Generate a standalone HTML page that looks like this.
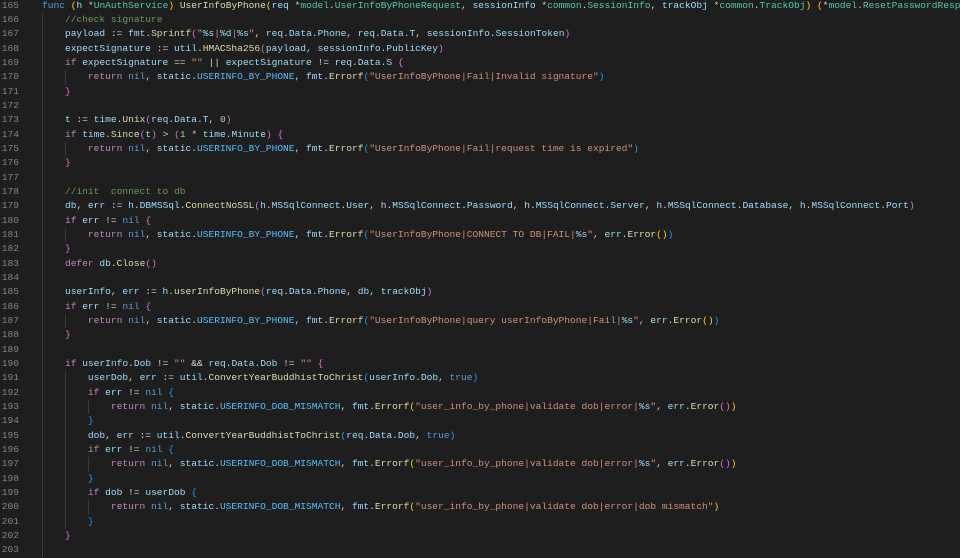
<!DOCTYPE html>
<html><head><meta charset="utf-8"><style>
html,body{margin:0;padding:0;background:#1e1e1e;width:960px;height:558px;overflow:hidden}
#w{position:absolute;top:-1.2px;left:0;font-family:"Liberation Mono",monospace;font-size:9.57px;line-height:14.33px;color:#d4d4d4;white-space:normal}
.r{height:14.33px;position:relative;overflow:visible}
.ln{position:absolute;left:0;top:0;width:19px;text-align:right;color:#858585}
.cd{position:absolute;left:42px;top:0;white-space:pre}
i{display:inline-block;width:4ch;height:14.33px;vertical-align:top;border-left:1px solid #3a3a3a;box-sizing:border-box}
.k{color:#569cd6}.c{color:#c586c0}.v{color:#9cdcfe}.f{color:#dcdcaa}.t{color:#4ec9b0}.s{color:#ce9178}.n{color:#b5cea8}.m{color:#6a9955}.o{color:#4fc1ff}
.b1{color:#ffd700}.b2{color:#da70d6}.b3{color:#179fff}
</style></head><body><div id="w">
<div class="r"><span class="ln">165</span><span class="cd"><span class="k">func</span> <span class="b1">(</span><span class="v">h</span> *<span class="t">UnAuthService</span><span class="b1">)</span> <span class="f">UserInfoByPhone</span><span class="b1">(</span><span class="v">req</span> *<span class="t">model</span>.<span class="t">UserInfoByPhoneRequest</span>, <span class="v">sessionInfo</span> *<span class="t">common</span>.<span class="t">SessionInfo</span>, <span class="v">trackObj</span> *<span class="t">common</span>.<span class="t">TrackObj</span><span class="b1">)</span> <span class="b1">(</span>*<span class="t">model</span>.<span class="t">ResetPasswordResp</span></span></div>
<div class="r"><span class="ln">166</span><span class="cd"><i></i><span class="m">//check signature</span></span></div>
<div class="r"><span class="ln">167</span><span class="cd"><i></i><span class="v">payload</span> := <span class="v">fmt</span>.<span class="f">Sprintf</span><span class="b2">(</span><span class="s">"</span><span class="v">%s</span><span class="s">|</span><span class="v">%d</span><span class="s">|</span><span class="v">%s</span><span class="s">"</span>, <span class="v">req</span>.<span class="v">Data</span>.<span class="v">Phone</span>, <span class="v">req</span>.<span class="v">Data</span>.<span class="v">T</span>, <span class="v">sessionInfo</span>.<span class="v">SessionToken</span><span class="b2">)</span></span></div>
<div class="r"><span class="ln">168</span><span class="cd"><i></i><span class="v">expectSignature</span> := <span class="v">util</span>.<span class="f">HMACSha256</span><span class="b2">(</span><span class="v">payload</span>, <span class="v">sessionInfo</span>.<span class="v">PublicKey</span><span class="b2">)</span></span></div>
<div class="r"><span class="ln">169</span><span class="cd"><i></i><span class="c">if</span> <span class="v">expectSignature</span> == <span class="s">""</span> || <span class="v">expectSignature</span> != <span class="v">req</span>.<span class="v">Data</span>.<span class="v">S</span> <span class="b2">{</span></span></div>
<div class="r"><span class="ln">170</span><span class="cd"><i></i><i></i><span class="c">return</span> <span class="k">nil</span>, <span class="v">static</span>.<span class="o">USERINFO_BY_PHONE</span>, <span class="v">fmt</span>.<span class="f">Errorf</span><span class="b3">(</span><span class="s">"UserInfoByPhone|Fail|Invalid signature"</span><span class="b3">)</span></span></div>
<div class="r"><span class="ln">171</span><span class="cd"><i></i><span class="b2">}</span></span></div>
<div class="r"><span class="ln">172</span><span class="cd"><i></i></span></div>
<div class="r"><span class="ln">173</span><span class="cd"><i></i><span class="v">t</span> := <span class="v">time</span>.<span class="f">Unix</span><span class="b2">(</span><span class="v">req</span>.<span class="v">Data</span>.<span class="v">T</span>, <span class="n">0</span><span class="b2">)</span></span></div>
<div class="r"><span class="ln">174</span><span class="cd"><i></i><span class="c">if</span> <span class="v">time</span>.<span class="f">Since</span><span class="b2">(</span><span class="v">t</span><span class="b2">)</span> &gt; <span class="b2">(</span><span class="n">1</span> * <span class="v">time</span>.<span class="v">Minute</span><span class="b2">)</span> <span class="b2">{</span></span></div>
<div class="r"><span class="ln">175</span><span class="cd"><i></i><i></i><span class="c">return</span> <span class="k">nil</span>, <span class="v">static</span>.<span class="o">USERINFO_BY_PHONE</span>, <span class="v">fmt</span>.<span class="f">Errorf</span><span class="b3">(</span><span class="s">"UserInfoByPhone|Fail|request time is expired"</span><span class="b3">)</span></span></div>
<div class="r"><span class="ln">176</span><span class="cd"><i></i><span class="b2">}</span></span></div>
<div class="r"><span class="ln">177</span><span class="cd"><i></i></span></div>
<div class="r"><span class="ln">178</span><span class="cd"><i></i><span class="m">//init  connect to db</span></span></div>
<div class="r"><span class="ln">179</span><span class="cd"><i></i><span class="v">db</span>, <span class="v">err</span> := <span class="v">h</span>.<span class="v">DBMSSql</span>.<span class="f">ConnectNoSSL</span><span class="b2">(</span><span class="v">h</span>.<span class="v">MSSqlConnect</span>.<span class="v">User</span>, <span class="v">h</span>.<span class="v">MSSqlConnect</span>.<span class="v">Password</span>, <span class="v">h</span>.<span class="v">MSSqlConnect</span>.<span class="v">Server</span>, <span class="v">h</span>.<span class="v">MSSqlConnect</span>.<span class="v">Database</span>, <span class="v">h</span>.<span class="v">MSSqlConnect</span>.<span class="v">Port</span><span class="b2">)</span></span></div>
<div class="r"><span class="ln">180</span><span class="cd"><i></i><span class="c">if</span> <span class="v">err</span> != <span class="k">nil</span> <span class="b2">{</span></span></div>
<div class="r"><span class="ln">181</span><span class="cd"><i></i><i></i><span class="c">return</span> <span class="k">nil</span>, <span class="v">static</span>.<span class="o">USERINFO_BY_PHONE</span>, <span class="v">fmt</span>.<span class="f">Errorf</span><span class="b3">(</span><span class="s">"UserInfoByPhone|CONNECT TO DB|FAIL|</span><span class="v">%s</span><span class="s">"</span>, <span class="v">err</span>.<span class="f">Error</span><span class="b1">()</span><span class="b3">)</span></span></div>
<div class="r"><span class="ln">182</span><span class="cd"><i></i><span class="b2">}</span></span></div>
<div class="r"><span class="ln">183</span><span class="cd"><i></i><span class="c">defer</span> <span class="v">db</span>.<span class="f">Close</span><span class="b2">()</span></span></div>
<div class="r"><span class="ln">184</span><span class="cd"><i></i></span></div>
<div class="r"><span class="ln">185</span><span class="cd"><i></i><span class="v">userInfo</span>, <span class="v">err</span> := <span class="v">h</span>.<span class="f">userInfoByPhone</span><span class="b2">(</span><span class="v">req</span>.<span class="v">Data</span>.<span class="v">Phone</span>, <span class="v">db</span>, <span class="v">trackObj</span><span class="b2">)</span></span></div>
<div class="r"><span class="ln">186</span><span class="cd"><i></i><span class="c">if</span> <span class="v">err</span> != <span class="k">nil</span> <span class="b2">{</span></span></div>
<div class="r"><span class="ln">187</span><span class="cd"><i></i><i></i><span class="c">return</span> <span class="k">nil</span>, <span class="v">static</span>.<span class="o">USERINFO_BY_PHONE</span>, <span class="v">fmt</span>.<span class="f">Errorf</span><span class="b3">(</span><span class="s">"UserInfoByPhone|query userInfoByPhone|Fail|</span><span class="v">%s</span><span class="s">"</span>, <span class="v">err</span>.<span class="f">Error</span><span class="b1">()</span><span class="b3">)</span></span></div>
<div class="r"><span class="ln">188</span><span class="cd"><i></i><span class="b2">}</span></span></div>
<div class="r"><span class="ln">189</span><span class="cd"><i></i></span></div>
<div class="r"><span class="ln">190</span><span class="cd"><i></i><span class="c">if</span> <span class="v">userInfo</span>.<span class="v">Dob</span> != <span class="s">""</span> &amp;&amp; <span class="v">req</span>.<span class="v">Data</span>.<span class="v">Dob</span> != <span class="s">""</span> <span class="b2">{</span></span></div>
<div class="r"><span class="ln">191</span><span class="cd"><i></i><i></i><span class="v">userDob</span>, <span class="v">err</span> := <span class="v">util</span>.<span class="f">ConvertYearBuddhistToChrist</span><span class="b3">(</span><span class="v">userInfo</span>.<span class="v">Dob</span>, <span class="k">true</span><span class="b3">)</span></span></div>
<div class="r"><span class="ln">192</span><span class="cd"><i></i><i></i><span class="c">if</span> <span class="v">err</span> != <span class="k">nil</span> <span class="b3">{</span></span></div>
<div class="r"><span class="ln">193</span><span class="cd"><i></i><i></i><i></i><span class="c">return</span> <span class="k">nil</span>, <span class="v">static</span>.<span class="o">USERINFO_DOB_MISMATCH</span>, <span class="v">fmt</span>.<span class="f">Errorf</span><span class="b1">(</span><span class="s">"user_info_by_phone|validate dob|error|</span><span class="v">%s</span><span class="s">"</span>, <span class="v">err</span>.<span class="f">Error</span><span class="b2">()</span><span class="b1">)</span></span></div>
<div class="r"><span class="ln">194</span><span class="cd"><i></i><i></i><span class="b3">}</span></span></div>
<div class="r"><span class="ln">195</span><span class="cd"><i></i><i></i><span class="v">dob</span>, <span class="v">err</span> := <span class="v">util</span>.<span class="f">ConvertYearBuddhistToChrist</span><span class="b3">(</span><span class="v">req</span>.<span class="v">Data</span>.<span class="v">Dob</span>, <span class="k">true</span><span class="b3">)</span></span></div>
<div class="r"><span class="ln">196</span><span class="cd"><i></i><i></i><span class="c">if</span> <span class="v">err</span> != <span class="k">nil</span> <span class="b3">{</span></span></div>
<div class="r"><span class="ln">197</span><span class="cd"><i></i><i></i><i></i><span class="c">return</span> <span class="k">nil</span>, <span class="v">static</span>.<span class="o">USERINFO_DOB_MISMATCH</span>, <span class="v">fmt</span>.<span class="f">Errorf</span><span class="b1">(</span><span class="s">"user_info_by_phone|validate dob|error|</span><span class="v">%s</span><span class="s">"</span>, <span class="v">err</span>.<span class="f">Error</span><span class="b2">()</span><span class="b1">)</span></span></div>
<div class="r"><span class="ln">198</span><span class="cd"><i></i><i></i><span class="b3">}</span></span></div>
<div class="r"><span class="ln">199</span><span class="cd"><i></i><i></i><span class="c">if</span> <span class="v">dob</span> != <span class="v">userDob</span> <span class="b3">{</span></span></div>
<div class="r"><span class="ln">200</span><span class="cd"><i></i><i></i><i></i><span class="c">return</span> <span class="k">nil</span>, <span class="v">static</span>.<span class="o">USERINFO_DOB_MISMATCH</span>, <span class="v">fmt</span>.<span class="f">Errorf</span><span class="b1">(</span><span class="s">"user_info_by_phone|validate dob|error|dob mismatch"</span><span class="b1">)</span></span></div>
<div class="r"><span class="ln">201</span><span class="cd"><i></i><i></i><span class="b3">}</span></span></div>
<div class="r"><span class="ln">202</span><span class="cd"><i></i><span class="b2">}</span></span></div>
<div class="r"><span class="ln">203</span><span class="cd"><i></i></span></div>
</div></body></html>
